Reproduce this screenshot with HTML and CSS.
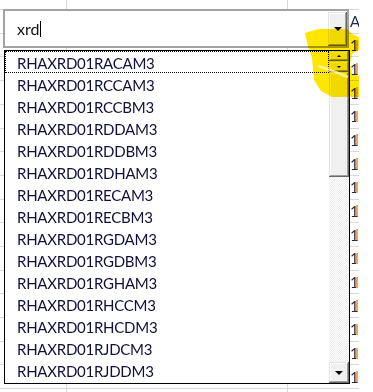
FILE: index.html
```html
<!DOCTYPE html>
<html>
<head>
<meta charset="utf-8">
<link rel="stylesheet" href="styles.css">
</head>
<body>
<div class="screen">
  <div class="sheet">
    <div class="row first"><div class="c a"></div><div class="c b">AAAB1C2</div><div class="c cc">AAAB-01</div><div class="c d"></div></div>
    <div class="row"><div class="c a"></div><div class="c b"></div><div class="c cc"></div><div class="c d"><span class="one">A</span></div></div>
    <div class="row"><div class="c a"></div><div class="c b"></div><div class="c cc"></div><div class="c d"><span class="one">1</span><span class="or"></span></div></div>
    <div class="row"><div class="c a"></div><div class="c b"></div><div class="c cc"></div><div class="c d"><span class="one">1</span><span class="or"></span></div></div>
    <div class="row"><div class="c a"></div><div class="c b"></div><div class="c cc"></div><div class="c d"><span class="one">1</span><span class="or"></span></div></div>
    <div class="row"><div class="c a"></div><div class="c b"></div><div class="c cc"></div><div class="c d"><span class="one">1</span><span class="or"></span></div></div>
    <div class="row"><div class="c a"></div><div class="c b"></div><div class="c cc"></div><div class="c d"><span class="one">1</span><span class="or"></span></div></div>
    <div class="row"><div class="c a"></div><div class="c b"></div><div class="c cc"></div><div class="c d"><span class="one">1</span><span class="or"></span></div></div>
    <div class="row"><div class="c a"></div><div class="c b"></div><div class="c cc"></div><div class="c d"><span class="one">1</span><span class="or"></span></div></div>
    <div class="row"><div class="c a"></div><div class="c b"></div><div class="c cc"></div><div class="c d"><span class="one">1</span><span class="or"></span></div></div>
    <div class="row"><div class="c a"></div><div class="c b"></div><div class="c cc"></div><div class="c d"><span class="one">1</span><span class="or"></span></div></div>
    <div class="row"><div class="c a"></div><div class="c b"></div><div class="c cc"></div><div class="c d"><span class="one">1</span><span class="or"></span></div></div>
    <div class="row"><div class="c a"></div><div class="c b"></div><div class="c cc"></div><div class="c d"><span class="one">1</span><span class="or"></span></div></div>
    <div class="row"><div class="c a"></div><div class="c b"></div><div class="c cc"></div><div class="c d"><span class="one">1</span><span class="or"></span></div></div>
    <div class="row"><div class="c a"></div><div class="c b"></div><div class="c cc"></div><div class="c d"><span class="one">1</span><span class="or"></span></div></div>
    <div class="row"><div class="c a"></div><div class="c b"></div><div class="c cc"></div><div class="c d"><span class="one">1</span><span class="or"></span></div></div>
    <div class="row last"><div class="c a"></div><div class="c b">AAAB1C0A0B00</div><div class="c cc">AAAB-01</div><div class="c d"><span class="one">1</span><span class="or"></span></div></div>
    <div class="row"><div class="c a"></div><div class="c b"></div><div class="c cc"></div><div class="c d"></div></div>
  </div>

  <div class="combo">
    <div class="field"><span class="val">xrd</span><span class="caret"></span></div>
    <div class="btn big"><span class="tri down"></span></div>
  </div>

  <div class="list">
    <ul class="items">
      <li class="focus">RHAXRD01RACAM3</li>
      <li>RHAXRD01RCCAM3</li>
      <li>RHAXRD01RCCBM3</li>
      <li>RHAXRD01RDDAM3</li>
      <li>RHAXRD01RDDBM3</li>
      <li>RHAXRD01RDHAM3</li>
      <li>RHAXRD01RECAM3</li>
      <li>RHAXRD01RECBM3</li>
      <li>RHAXRD01RGDAM3</li>
      <li>RHAXRD01RGDBM3</li>
      <li>RHAXRD01RGHAM3</li>
      <li>RHAXRD01RHCCM3</li>
      <li>RHAXRD01RHCDM3</li>
      <li>RHAXRD01RJDCM3</li>
      <li>RHAXRD01RJDDM3</li>
    </ul>
    <div class="sbar">
      <div class="btn small"><span class="tiny up"></span></div>
      <div class="btn small s2"><span class="tiny dn"></span></div>
      <div class="btn thumb"></div>
      <div class="track"></div>
      <div class="btn sqr"><span class="tri down"></span></div>
    </div>
  </div>

  <svg class="marker" width="359" height="392" viewBox="0 0 359 392">
    <path class="hl" d="M305 33 L318 29 L347 29 L352 34 L359 37 L359 50 L352 54 L350 64 L352 74 L359 76 L359 97 L332 97 L321 91 L314 80 L312 58 L308 47 Z" />
    <path class="streak" d="M318 66 L333 71 L348 77" />
  </svg>
</div>
</body>
</html>
```

FILE: styles.css
```css
* { box-sizing: border-box; margin: 0; padding: 0; }
html, body { width: 373px; height: 392px; overflow: hidden; background: #fff; }
body { font-family: Lato, "Liberation Sans", sans-serif; color: #10103a; }

.screen { position: relative; width: 373px; height: 392px; overflow: hidden; background: #fff; }

/* spreadsheet behind */
.sheet { width: 359px; height: 392px; overflow: hidden; display: flex; flex-direction: column; }
.row {
  flex: none;
  height: 23.7px;
  display: grid;
  grid-template-columns: 67px 221px 61px 1fr;
  border-bottom: 1px solid #d9d9d9;
}
.row.first { margin-top: -13.6px; }
.c {
  overflow: hidden;
  white-space: nowrap;
  font-size: 15px;
  letter-spacing: -0.25px;
  line-height: 22px;
  padding-left: 4px;
}
.row.first .c { line-height: 17px; }
.row.last .c { line-height: 24px; }
.a, .b { border-right: 1px solid #d9d9d9; }
.cc { padding-left: 3px; }
.d { padding-left: 1px; display: flex; align-items: center; }
.one { font-size: 15px; color: #1e2a48; width: 6px; overflow: visible; }
.or { width: 2px; height: 11px; background: #f2a45a; }

/* combo box */
.combo {
  position: absolute;
  left: 3px;
  top: 9px;
  width: 346px;
  height: 39px;
  border: 2px solid #a3a3a3;
  display: flex;
  background: #fff;
}
.field {
  flex: 1;
  display: flex;
  align-items: center;
  padding-left: 12px;
  font-size: 16px;
  color: #111;
}
.caret { width: 1px; height: 16px; background: #000; margin-left: 1px; }

.btn {
  background: #f0f0f0;
  box-shadow: inset -1px -1px #696969, inset 1px 1px #e3e3e3, inset -2px -2px #a0a0a0, inset 2px 2px #fff;
  display: flex;
  align-items: center;
  justify-content: center;
}
.btn.big { width: 19px; margin-top: 1px; }
.tri.down {
  width: 0; height: 0;
  border-left: 4px solid transparent;
  border-right: 4px solid transparent;
  border-top: 4px solid #000;
}

/* dropdown list */
.list {
  position: absolute;
  left: 4px;
  top: 50px;
  width: 346px;
  height: 334px;
  border: 1px solid #000;
  background: #fff;
  display: flex;
}
.items { flex: 1; list-style: none; overflow: hidden; }
.items li {
  height: 22px;
  border: 1px solid transparent;
  padding-top: 1px;
  padding-left: 11px;
  font-size: 15px;
  letter-spacing: -0.25px;
  line-height: 21px;
  white-space: nowrap;
  color: #10103a;
}
.items li.focus { border: 1px dotted #000; }

.sbar { width: 20px; display: flex; flex-direction: column; }
.btn.small { height: 10px; }
.btn.small.s2 { height: 11px; }
.btn.thumb { height: 105px; }
.track {
  flex: 1;
  background: repeating-conic-gradient(#ececec 0 25%, #fff 0 50%) 0 0 / 2px 2px;
}
.btn.sqr { height: 21px; }
.tiny { width: 0; height: 0; border-left: 2px solid transparent; border-right: 2px solid transparent; }
.tiny.up { border-bottom: 2px solid #000; }
.tiny.dn { border-top: 2px solid #000; }

/* highlighter stroke */
.marker {
  position: absolute;
  left: 0;
  top: 0;
  pointer-events: none;
}
.marker .hl { fill: #ffe600; mix-blend-mode: multiply; }
.marker .streak { fill: none; stroke: #fff7b0; stroke-width: 2.5; opacity: 0.8; }
```
